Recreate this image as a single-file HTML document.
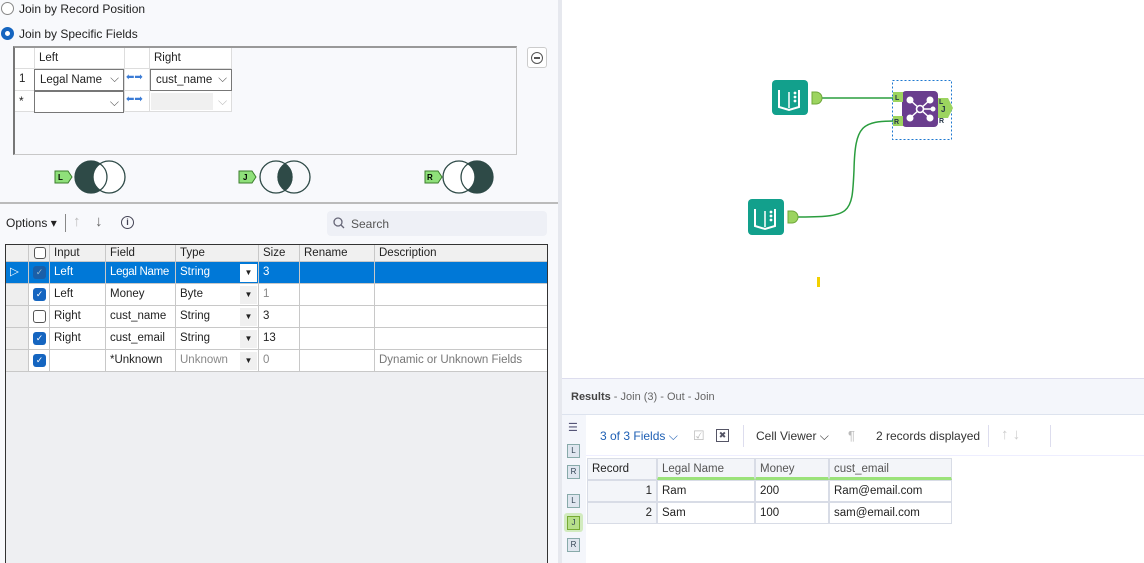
<!DOCTYPE html>
<html><head><style>
*{box-sizing:border-box;margin:0;padding:0}
body{width:1144px;height:563px;overflow:hidden;background:#fff;font-family:"Liberation Sans",sans-serif;font-size:12px;color:#222;position:relative}
.a{position:absolute}
.left{left:0;top:0;width:558px;height:563px;background:#f8f9fc}
.cell{position:absolute;border-right:1px solid #c8c8c8;border-bottom:1px solid #c8c8c8;padding-left:4px;line-height:21px;white-space:nowrap;overflow:hidden;font-size:11.5px}
.cb{position:absolute;width:13px;height:13px;border-radius:3px;background:#1565c0;color:#fff;font-size:9px;text-align:center;line-height:13px}
.cbe{position:absolute;width:13px;height:13px;border-radius:3px;border:1px solid #555;background:#fff}
.ic{position:absolute;width:13px;height:14px;border:1px solid #8aa;background:#dfe6ef;font-size:8px;text-align:center;line-height:12px;color:#345}
</style></head><body>
<div class="a left"></div>
<div class="a" style="left:1px;top:2px;width:13px;height:13px;border-radius:50%;border:1px solid #888;background:#fff"></div>
<div class="a" style="left:19px;top:2px">Join by Record Position</div>
<div class="a" style="left:1px;top:27px;width:13px;height:13px;border-radius:50%;border:4px solid #1565c0;background:#fff"></div>
<div class="a" style="left:19px;top:27px">Join by Specific Fields</div>
<div class="a" style="left:13px;top:46px;width:504px;height:109px;border:1px solid #c8c8c8;border-left:2px solid #777;border-top:2px solid #999;background:#f8f9fc"></div>
<div class="a" style="left:15px;top:48px;width:216px;height:64px;background:#fff"></div>
<div class="a" style="left:34px;top:48px;width:1px;height:64px;background:#ddd"></div>
<div class="a" style="left:124px;top:48px;width:1px;height:64px;background:#ddd"></div>
<div class="a" style="left:149px;top:48px;width:1px;height:64px;background:#ddd"></div>
<div class="a" style="left:231px;top:48px;width:1px;height:64px;background:#ddd"></div>
<div class="a" style="left:15px;top:68px;width:216px;height:1px;background:#ddd"></div>
<div class="a" style="left:15px;top:90px;width:216px;height:1px;background:#ddd"></div>
<div class="a" style="left:15px;top:111px;width:216px;height:1px;background:#ddd"></div>
<div class="a" style="left:39px;top:52px;font-size:11.5px">Left</div>
<div class="a" style="left:154px;top:52px;font-size:11.5px">Right</div>
<div class="a" style="left:19px;top:73px;font-size:11.5px">1</div>
<div class="a" style="left:19px;top:94px">*</div>
<div class="a" style="left:34px;top:69px;width:90px;height:22px;border:1px solid #777;background:#fff;padding:4px 0 0 5px;font-size:11.5px">Legal Name<span class="a" style="right:4px;top:3px;color:#555">⌵</span></div>
<div class="a" style="left:34px;top:91px;width:90px;height:22px;border:1px solid #777;background:#fff"><span class="a" style="right:4px;top:3px;color:#555">⌵</span></div>
<div class="a" style="top:69px;height:22px;border:1px solid #777;background:#fff;padding:4px 0 0 5px;left:150px;width:82px;font-size:11.5px">cust_name<span class="a" style="right:4px;top:3px;color:#555">⌵</span></div>
<div class="a" style="left:151px;top:93px;width:62px;height:17px;background:#f0f0f0"></div>
<div class="a" style="left:218px;top:94px;color:#bbb">⌵</div>
<div class="a" style="left:126px;top:72px;color:#3a7bd5;font-size:10px">⬅➡</div>
<div class="a" style="left:126px;top:94px;color:#3a7bd5;font-size:10px">⬅➡</div>
<div class="a" style="left:527px;top:47px;width:20px;height:21px;border:1px solid #ccc;border-radius:3px;background:#fff"><div class="a" style="left:3px;top:4px;width:12px;height:12px;border:1.5px solid #555;border-radius:50%"></div><div class="a" style="left:6px;top:9px;width:6px;height:2px;background:#555"></div></div>
<svg class="a" style="left:50px;top:158px" width="460" height="38">
<g stroke="#2e4a47" stroke-width="1.3"><circle cx="41" cy="19" r="16" fill="#2e4a47"/><circle cx="59" cy="19" r="16" fill="#fff"/><path d="M50 5.8 A16 16 0 0 1 50 32.2" fill="none"/></g>
<g stroke="#2e4a47" stroke-width="1.3" fill="none"><circle cx="226" cy="19" r="16"/><circle cx="244" cy="19" r="16"/><path d="M235 5.8 A16 16 0 0 1 235 32.2 A16 16 0 0 1 235 5.8Z" fill="#2e4a47"/></g>
<g stroke="#2e4a47" stroke-width="1.3"><circle cx="427" cy="19" r="16" fill="#2e4a47"/><circle cx="409" cy="19" r="16" fill="#fff"/><path d="M418 5.8 A16 16 0 0 0 418 32.2" fill="none"/></g>
<g font-size="8" font-weight="bold" font-family="Liberation Sans"><path d="M5 13h13l4 6-4 6H5z" fill="#8fe07a" stroke="#3b7d2c"/><text x="8" y="22">L</text>
<path d="M189 13h13l4 6-4 6h-13z" fill="#8fe07a" stroke="#3b7d2c"/><text x="193" y="22">J</text>
<path d="M375 13h13l4 6-4 6h-13z" fill="#8fe07a" stroke="#3b7d2c"/><text x="377" y="22">R</text></g>
</svg>
<div class="a" style="left:0;top:202px;width:558px;height:2px;background:#bbb"></div>
<div class="a" style="left:6px;top:216px">Options ▾</div>
<div class="a" style="left:65px;top:214px;width:1px;height:18px;background:#888"></div>
<div class="a" style="left:73px;top:213px;color:#bbb;font-size:15px;font-weight:bold">↑</div>
<div class="a" style="left:95px;top:213px;color:#666;font-size:15px;font-weight:bold">↓</div>
<div class="a" style="left:121px;top:216px;width:13px;height:13px;border:1.5px solid #445;border-radius:50%;font-size:9px;text-align:center;line-height:10px;font-weight:bold;color:#445">i</div>
<div class="a" style="left:327px;top:211px;width:220px;height:25px;background:#eef0f6;border-radius:4px"></div>
<svg class="a" style="left:333px;top:217px" width="12" height="12"><circle cx="5" cy="5" r="4" stroke="#667" fill="none" stroke-width="1.3"/><path d="M8 8l3 3" stroke="#667" stroke-width="1.3"/></svg>
<div class="a" style="left:351px;top:217px;color:#555">Search</div>
<div class="a" style="left:5px;top:244px;width:543px;height:319px;border:1px solid #333;border-bottom:none;background:#eeeff2"></div>
<div class="a" style="left:6px;top:245px;width:541px;height:127px;background:#fff"></div>
<div class="a" style="left:6px;top:245px;width:541px;height:17px;background:#f0f0f0"></div>
<div class="a" style="left:6px;top:262px;width:541px;height:22px;background:#0078d7"></div>
<div style="position:absolute;left:6px;top:245px">
<div class="cell" style="left:0;top:0;width:23px;height:17px;line-height:16px"></div>
<div class="cell" style="left:23px;top:0;width:21px;height:17px"></div>
<div class="cell" style="left:44px;top:0;width:56px;height:17px;line-height:16px">Input</div>
<div class="cell" style="left:100px;top:0;width:70px;height:17px;line-height:16px">Field</div>
<div class="cell" style="left:170px;top:0;width:83px;height:17px;line-height:16px">Type</div>
<div class="cell" style="left:253px;top:0;width:41px;height:17px;line-height:16px">Size</div>
<div class="cell" style="left:294px;top:0;width:75px;height:17px;line-height:16px">Rename</div>
<div class="cell" style="left:369px;top:0;width:172px;height:17px;line-height:16px;border-right:none">Description</div>
</div>
<div class="cbe" style="left:34px;top:247px;width:12px;height:12px"></div>
<div style="position:absolute;left:6px;top:262px;color:#fff">
<div class="cell" style="left:0;top:0;width:23px;height:22px;color:#fff">▷</div>
<div class="cell" style="left:23px;top:0;width:21px;height:22px"></div>
<div class="cell" style="left:44px;top:0;width:56px;height:22px">Left</div>
<div class="cell" style="left:100px;top:0;width:70px;height:22px;letter-spacing:-0.3px">Legal Name</div>
<div class="cell" style="left:170px;top:0;width:83px;height:22px">String</div>
<div class="cell" style="left:253px;top:0;width:41px;height:22px">3</div>
<div class="cell" style="left:294px;top:0;width:75px;height:22px"></div>
<div class="cell" style="left:369px;top:0;width:172px;height:22px;border-right:none"></div>
</div>
<div class="a" style="left:240px;top:264px;width:17px;height:18px;background:#fff;font-size:8px;text-align:center;line-height:18px">▼</div>
<div class="cb" style="left:33px;top:266px;background:#1a5fa8;color:#9bc">✓</div>
<div style="position:absolute;left:6px;top:284px">
<div class="cell" style="left:0;top:0;width:23px;height:22px;background:#eee"></div><div class="cell" style="left:23px;top:0;width:21px;height:22px"></div>
<div class="cell" style="left:44px;top:0;width:56px;height:22px">Left</div><div class="cell" style="left:100px;top:0;width:70px;height:22px">Money</div>
<div class="cell" style="left:170px;top:0;width:83px;height:22px">Byte</div><div class="cell" style="left:253px;top:0;width:41px;height:22px;color:#888">1</div>
<div class="cell" style="left:294px;top:0;width:75px;height:22px"></div><div class="cell" style="left:369px;top:0;width:172px;height:22px;border-right:none"></div>
<div class="cell" style="left:0;top:22px;width:23px;height:22px;background:#eee"></div><div class="cell" style="left:23px;top:22px;width:21px;height:22px"></div>
<div class="cell" style="left:44px;top:22px;width:56px;height:22px">Right</div><div class="cell" style="left:100px;top:22px;width:70px;height:22px">cust_name</div>
<div class="cell" style="left:170px;top:22px;width:83px;height:22px">String</div><div class="cell" style="left:253px;top:22px;width:41px;height:22px">3</div>
<div class="cell" style="left:294px;top:22px;width:75px;height:22px"></div><div class="cell" style="left:369px;top:22px;width:172px;height:22px;border-right:none"></div>
<div class="cell" style="left:0;top:44px;width:23px;height:22px;background:#eee"></div><div class="cell" style="left:23px;top:44px;width:21px;height:22px"></div>
<div class="cell" style="left:44px;top:44px;width:56px;height:22px">Right</div><div class="cell" style="left:100px;top:44px;width:70px;height:22px">cust_email</div>
<div class="cell" style="left:170px;top:44px;width:83px;height:22px">String</div><div class="cell" style="left:253px;top:44px;width:41px;height:22px">13</div>
<div class="cell" style="left:294px;top:44px;width:75px;height:22px"></div><div class="cell" style="left:369px;top:44px;width:172px;height:22px;border-right:none"></div>
<div class="cell" style="left:0;top:66px;width:23px;height:22px;background:#eee"></div><div class="cell" style="left:23px;top:66px;width:21px;height:22px"></div>
<div class="cell" style="left:44px;top:66px;width:56px;height:22px"></div><div class="cell" style="left:100px;top:66px;width:70px;height:22px">*Unknown</div>
<div class="cell" style="left:170px;top:66px;width:83px;height:22px;color:#888">Unknown</div><div class="cell" style="left:253px;top:66px;width:41px;height:22px;color:#888">0</div>
<div class="cell" style="left:294px;top:66px;width:75px;height:22px"></div><div class="cell" style="left:369px;top:66px;width:172px;height:22px;border-right:none;color:#777">Dynamic or Unknown Fields</div>
</div>
<div class="a" style="left:240px;top:286px;width:17px;height:18px;background:#f0f0f0;font-size:8px;text-align:center;line-height:18px">▼</div>
<div class="a" style="left:240px;top:308px;width:17px;height:18px;background:#f0f0f0;font-size:8px;text-align:center;line-height:18px">▼</div>
<div class="a" style="left:240px;top:330px;width:17px;height:18px;background:#f0f0f0;font-size:8px;text-align:center;line-height:18px">▼</div>
<div class="a" style="left:240px;top:352px;width:17px;height:18px;background:#f0f0f0;font-size:8px;text-align:center;line-height:18px">▼</div>
<div class="cb" style="left:33px;top:288px">✓</div>
<div class="cbe" style="left:33px;top:310px"></div>
<div class="cb" style="left:33px;top:332px">✓</div>
<div class="cb" style="left:33px;top:354px">✓</div>
<div class="a" style="left:558px;top:0;width:4px;height:563px;background:#e6e8ee"></div>
<svg class="a" style="left:562px;top:0" width="582" height="378">
<path d="M256 98 H334" stroke="#2a9d3e" stroke-width="1.5" fill="none"/>
<path d="M232 217 C290 217 290 215 292 170 C293 125 300 121 334 121" stroke="#2a9d3e" stroke-width="1.5" fill="none"/>
<g transform="translate(210,80)"><rect width="36" height="35" rx="4" fill="#12a08c"/><path d="M7 10v17l10 3 10-3V10" stroke="#fff" stroke-width="2" fill="none"/><path d="M17 12v16" stroke="#fff" stroke-width="1.5"/><circle cx="23" cy="13" r="1.4" fill="#fff"/><circle cx="23" cy="17" r="1.4" fill="#fff"/><circle cx="23" cy="21" r="1.4" fill="#fff"/></g>
<path d="M250 92h4a6 6 0 0 1 0 12h-4z" fill="#9cd45f" stroke="#6fa83a"/>
<g transform="translate(186,199)"><rect width="36" height="36" rx="4" fill="#12a08c"/><path d="M7 10v17l10 3 10-3V10" stroke="#fff" stroke-width="2" fill="none"/><path d="M17 12v16" stroke="#fff" stroke-width="1.5"/><circle cx="23" cy="13" r="1.4" fill="#fff"/><circle cx="23" cy="17" r="1.4" fill="#fff"/><circle cx="23" cy="21" r="1.4" fill="#fff"/></g>
<path d="M226 211h4a6 6 0 0 1 0 12h-4z" fill="#9cd45f" stroke="#6fa83a"/>
<rect x="330.5" y="80.5" width="59" height="59" fill="none" stroke="#1e78d0" stroke-dasharray="2,2"/>
<rect x="340" y="91" width="36" height="36" rx="4" fill="#6a3e8e"/>
<path d="M348 100L358 109M368 100L358 109M348 118L358 109M368 118L358 109M358 109H371" stroke="#fff" stroke-width="1.5"/>
<g fill="#fff"><circle cx="348" cy="100" r="3.5"/><circle cx="368" cy="100" r="3.5"/><circle cx="348" cy="118" r="3.5"/><circle cx="368" cy="118" r="3.5"/><circle cx="371" cy="109" r="2.5"/></g>
<circle cx="358" cy="109" r="3.5" fill="#6a3e8e" stroke="#fff" stroke-width="1.6"/>
<rect x="331" y="92" width="10" height="10" fill="#9cd45f"/><text x="333" y="100" font-size="7" font-weight="bold" fill="#234" font-family="Liberation Sans">L</text>
<rect x="331" y="116" width="10" height="10" fill="#9cd45f"/><text x="332" y="124" font-size="7" font-weight="bold" fill="#234" font-family="Liberation Sans">R</text>
<path d="M376 98h10l5 10-5 10h-10z" fill="#9cd45f"/>
<text x="377" y="104" font-size="7" font-weight="bold" fill="#234" font-family="Liberation Sans">L</text><text x="379" y="112" font-size="8" font-weight="bold" fill="#234" font-family="Liberation Sans">J</text><text x="377" y="123" font-size="7" font-weight="bold" fill="#234" font-family="Liberation Sans">R</text>
<rect x="255" y="277" width="3" height="10" fill="#f2d000"/>
</svg>
<div class="a" style="left:562px;top:378px;width:582px;height:185px;background:#f4f6fb;border-top:1px solid #dde"></div>
<div class="a" style="left:571px;top:391px;font-size:11px;color:#666"><b style="color:#444">Results</b> - Join (3) - Out - Join</div>
<div class="a" style="left:562px;top:414px;width:582px;height:1px;background:#dde3ee"></div>
<div class="a" style="left:586px;top:415px;width:558px;height:148px;background:#fff"></div>
<div class="a" style="left:586px;top:415px;width:558px;height:41px;background:#fff;border-bottom:1px solid #eef"></div>
<div class="a" style="left:568px;top:421px;color:#557;font-size:11px">☰</div>
<div class="ic" style="left:567px;top:444px">L</div>
<div class="ic" style="left:567px;top:465px">R</div>
<div class="ic" style="left:567px;top:494px">L</div>
<div class="a" style="left:564px;top:513px;width:19px;height:19px;background:#d2ebbf;border-radius:3px"></div>
<div class="ic" style="left:567px;top:516px;border-color:#7a3;background:#b7e08a">J</div>
<div class="ic" style="left:567px;top:538px">R</div>
<div class="a" style="left:600px;top:429px;color:#1e5fb4">3 of 3 Fields ⌵</div>
<div class="a" style="left:693px;top:428px;color:#bbb;font-size:13px">☑</div>
<div class="a" style="left:716px;top:429px;width:13px;height:13px;border:1.5px solid #556;font-size:9px;text-align:center;line-height:10px;color:#556">✖</div>
<div class="a" style="left:743px;top:425px;width:1px;height:22px;background:#dde"></div>
<div class="a" style="left:756px;top:429px;color:#333">Cell Viewer ⌵</div>
<div class="a" style="left:848px;top:428px;color:#bbb;font-size:13px">¶</div>
<div class="a" style="left:876px;top:429px;color:#333">2 records displayed</div>
<div class="a" style="left:988px;top:425px;width:1px;height:22px;background:#dde"></div>
<div class="a" style="left:1001px;top:426px;color:#ccc;font-size:15px;font-weight:bold">↑ ↓</div>
<div class="a" style="left:1050px;top:425px;width:1px;height:22px;background:#dde"></div>
<div style="position:absolute;left:587px;top:458px">
<div class="cell" style="left:0;top:0;width:70px;height:22px;background:#f3f5f9;border:1px solid #d8dce6">Record</div>
<div class="cell" style="left:70px;top:0;width:98px;height:22px;background:#f3f5f9;border:1px solid #d8dce6;border-bottom:3px solid #9be27a;color:#555">Legal Name</div>
<div class="cell" style="left:168px;top:0;width:74px;height:22px;background:#f3f5f9;border:1px solid #d8dce6;border-bottom:3px solid #9be27a;color:#555">Money</div>
<div class="cell" style="left:242px;top:0;width:123px;height:22px;background:#f3f5f9;border:1px solid #d8dce6;border-bottom:3px solid #9be27a;color:#555">cust_email</div>
<div class="cell" style="left:0;top:22px;width:70px;height:22px;background:#f3f5f9;border:1px solid #d8dce6;text-align:right;padding-right:4px">1</div>
<div class="cell" style="left:70px;top:22px;width:98px;height:22px;border:1px solid #d8dce6">Ram</div>
<div class="cell" style="left:168px;top:22px;width:74px;height:22px;border:1px solid #d8dce6">200</div>
<div class="cell" style="left:242px;top:22px;width:123px;height:22px;border:1px solid #d8dce6">Ram@email.com</div>
<div class="cell" style="left:0;top:44px;width:70px;height:22px;background:#f3f5f9;border:1px solid #d8dce6;text-align:right;padding-right:4px">2</div>
<div class="cell" style="left:70px;top:44px;width:98px;height:22px;border:1px solid #d8dce6">Sam</div>
<div class="cell" style="left:168px;top:44px;width:74px;height:22px;border:1px solid #d8dce6">100</div>
<div class="cell" style="left:242px;top:44px;width:123px;height:22px;border:1px solid #d8dce6">sam@email.com</div>
</div>
</body></html>
